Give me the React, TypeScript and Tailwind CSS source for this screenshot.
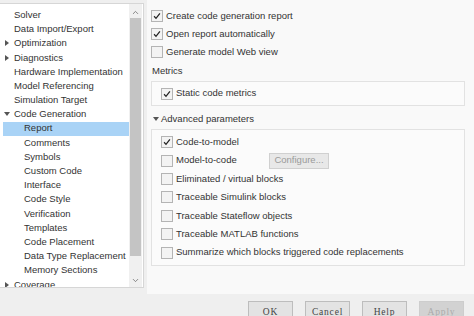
import { ChevronUp, ChevronDown } from "lucide-react";

type Node = { label: string; level: number; arrow?: "right" | "down"; selected?: boolean };

const tree: Node[] = [
  { label: "Solver", level: 0 },
  { label: "Data Import/Export", level: 0 },
  { label: "Optimization", level: 0, arrow: "right" },
  { label: "Diagnostics", level: 0, arrow: "right" },
  { label: "Hardware Implementation", level: 0 },
  { label: "Model Referencing", level: 0 },
  { label: "Simulation Target", level: 0 },
  { label: "Code Generation", level: 0, arrow: "down" },
  { label: "Report", level: 1, selected: true },
  { label: "Comments", level: 1 },
  { label: "Symbols", level: 1 },
  { label: "Custom Code", level: 1 },
  { label: "Interface", level: 1 },
  { label: "Code Style", level: 1 },
  { label: "Verification", level: 1 },
  { label: "Templates", level: 1 },
  { label: "Code Placement", level: 1 },
  { label: "Data Type Replacement", level: 1 },
  { label: "Memory Sections", level: 1 },
  { label: "Coverage", level: 0, arrow: "right" },
];

const advanced: { label: string; checked: boolean; configure?: boolean }[] = [
  { label: "Code-to-model", checked: true },
  { label: "Model-to-code", checked: false, configure: true },
  { label: "Eliminated / virtual blocks", checked: false },
  { label: "Traceable Simulink blocks", checked: false },
  { label: "Traceable Stateflow objects", checked: false },
  { label: "Traceable MATLAB functions", checked: false },
  { label: "Summarize which blocks triggered code replacements", checked: false },
];

function Check({ checked }: { checked: boolean }) {
  return (
    <div className="flex h-[12px] w-[12px] shrink-0 items-center justify-center border border-[#b4b4b4] bg-[#f3f3f3]">
      {checked && (
        <svg viewBox="0 0 12 12" className="h-[10px] w-[10px]">
          <path d="M2.5 6.3 L4.8 8.8 L9.5 2.8" fill="none" stroke="#222" strokeWidth="1.5" />
        </svg>
      )}
    </div>
  );
}

function CheckRow({ label, checked }: { label: string; checked: boolean }) {
  return (
    <div className="flex h-[18px] items-center gap-[3px] whitespace-nowrap">
      <Check checked={checked} />
      <span>{label}</span>
    </div>
  );
}

function DlgButton({ label, disabled }: { label: string; disabled?: boolean }) {
  return (
    <div
      className={`flex h-[22px] w-[45px] items-start justify-center border pt-[3px] font-['Liberation_Serif',serif] text-[9.5px] tracking-[0.8px] ${
        disabled ? "border-[#cdcdcd] bg-[#d2d2d2] text-[#ababab]" : "border-[#bdbdbd] bg-[#e3e3e3] text-[#444]"
      }`}
    >
      <span>
        <span className={disabled ? "" : "underline decoration-[#666] underline-offset-[3px]"}>{label[0]}</span>
        {label.slice(1)}
      </span>
    </div>
  );
}

export default function App() {
  return (
    <div className="flex h-[316px] w-[474px] flex-col overflow-hidden bg-[#efefef] font-['Liberation_Sans',Arial,sans-serif] text-[9.5px] text-[#333]">
      <div className="flex h-[294px] shrink-0">
        {/* tree */}
        <div className="flex h-[288px] w-[144px] shrink-0 flex-col pt-[3px]">
          <div className="flex h-[285px] border border-l-0 border-[#d6d6d6] bg-white">
            <div className="flex w-[129px] flex-col overflow-hidden pl-[3px] pt-[4px]">
              {tree.map((n) => (
                <div
                  key={n.label}
                  className={`relative flex h-[14.2px] shrink-0 items-center whitespace-nowrap ${n.selected ? "bg-[#a9d3f6]" : ""}`}
                  style={{ paddingLeft: n.level === 0 ? 11 : 21 }}
                >
                  {n.arrow === "right" && (
                    <span className="absolute left-[2px] top-[4px] h-0 w-0 border-y-[3px] border-l-[4px] border-y-transparent border-l-[#555]" />
                  )}
                  {n.arrow === "down" && (
                    <span className="absolute left-[1px] top-[5px] h-0 w-0 border-x-[3px] border-t-[4px] border-x-transparent border-t-[#555]" />
                  )}
                  {n.label}
                </div>
              ))}
            </div>
            <div className="flex w-[13px] flex-col items-center bg-[#f0f0f0]">
              <ChevronUp className="mt-[4px] h-[9px] w-[9px] text-[#666]" strokeWidth={2} />
              <div className="mt-[1px] h-[238px] w-[11px] bg-[#c4c4c4]" />
              <div className="flex-1" />
              <ChevronDown className="mb-[2px] h-[9px] w-[9px] text-[#666]" strokeWidth={2} />
            </div>
          </div>
        </div>

        {/* content */}
        <div className="ml-[3px] flex flex-1 flex-col bg-[#f9f9f9] pl-[4px] pr-[9px] pt-[7px]">
          <CheckRow label="Create code generation report" checked />
          <CheckRow label="Open report automatically" checked />
          <CheckRow label="Generate model Web view" checked={false} />

          <div className="ml-[1px] mt-[2px] flex h-[16px] items-center">Metrics</div>
          <div className="mt-[2px] flex h-[25px] items-center border border-[#e2e2e2] bg-[#fbfbfb] pl-[9px]">
            <CheckRow label="Static code metrics" checked />
          </div>

          <div className="relative mt-[5px] flex h-[16px] items-center pl-[10px]">
            <span className="absolute left-[2px] top-[6px] h-0 w-0 border-x-[3px] border-t-[4px] border-x-transparent border-t-[#555]" />
            Advanced parameters
          </div>
          <div className="mt-[2px] flex h-[137px] flex-col border border-[#e2e2e2] bg-[#fbfbfb] pl-[9px] pt-[3px]">
            {advanced.map((a) => (
              <div key={a.label} className="flex h-[18.4px] items-center">
                <div className="w-[108px] shrink-0">
                  <CheckRow label={a.label} checked={a.checked} />
                </div>
                {a.configure && (
                  <div className="flex h-[16px] w-[60px] items-center justify-center border border-[#d0d0d0] bg-[#e8e8e8] text-[#9a9a9a]">
                    Configure...
                  </div>
                )}
              </div>
            ))}
          </div>
        </div>
      </div>

      {/* buttons */}
      <div className="flex justify-end gap-[12px] pr-[10px] pt-[7px]">
        <DlgButton label="OK" />
        <DlgButton label="Cancel" />
        <DlgButton label="Help" />
        <DlgButton label="Apply" disabled />
      </div>
    </div>
  );
}
